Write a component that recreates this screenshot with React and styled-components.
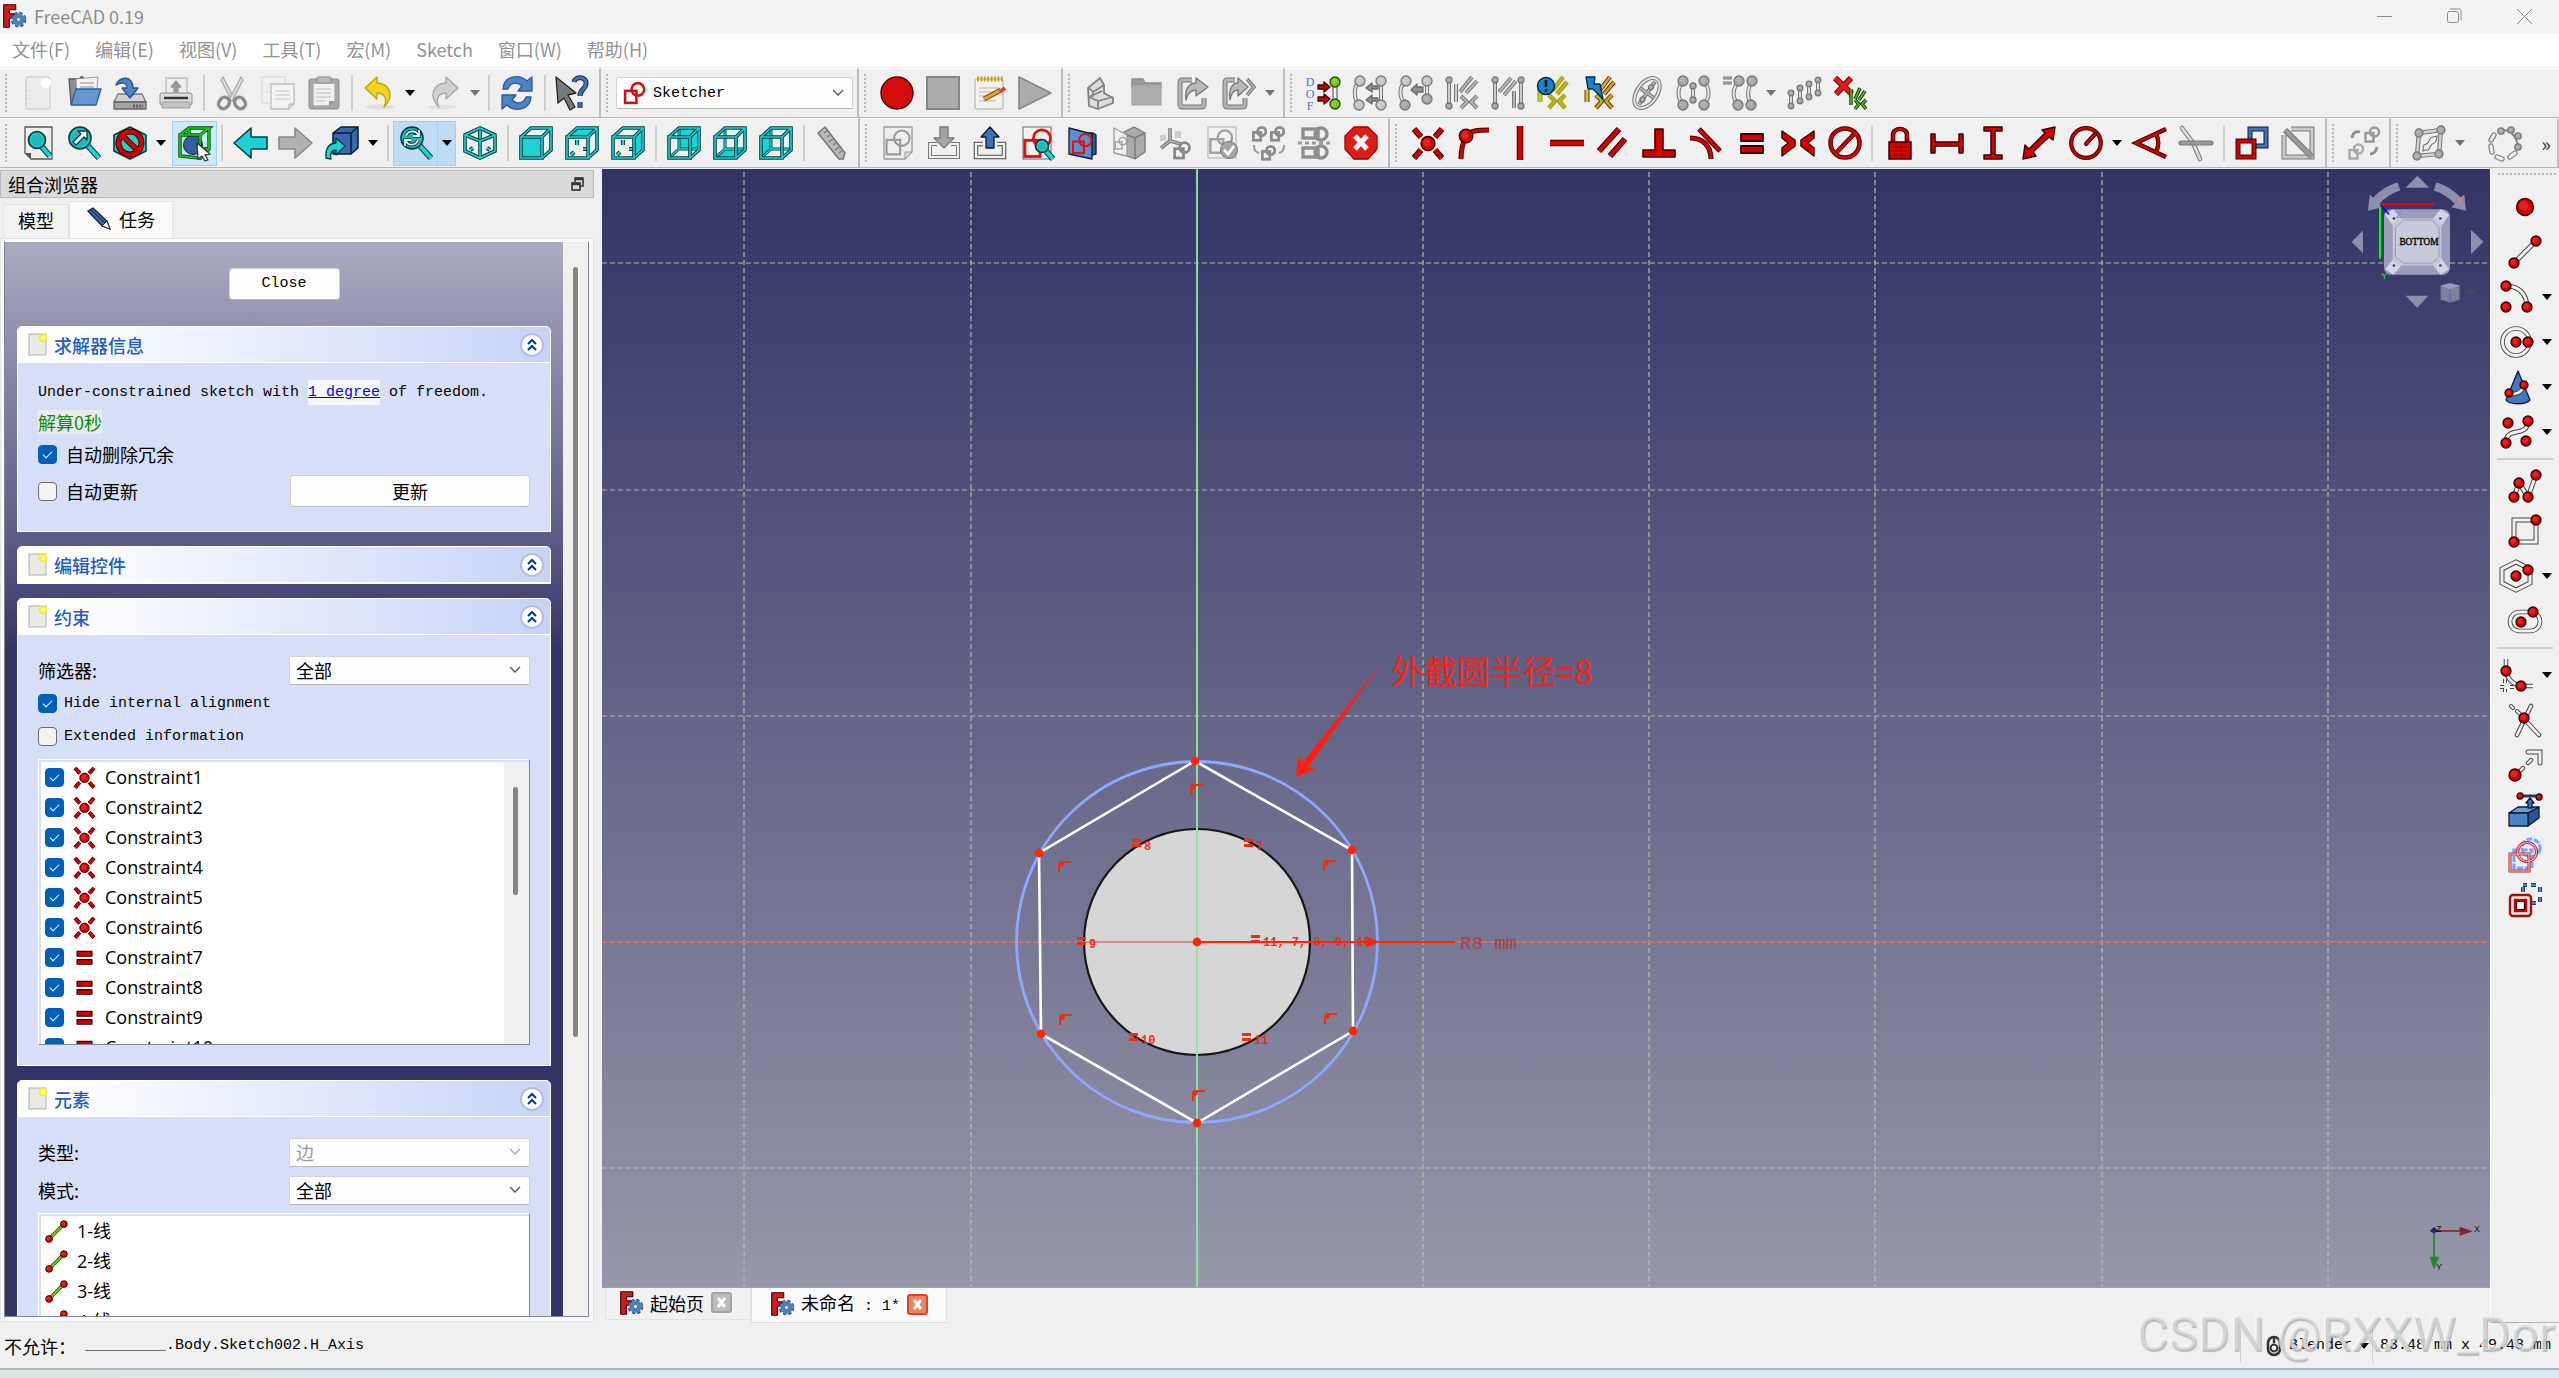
import { useState } from "react";
import styled, { createGlobalStyle, css } from "styled-components";

const SANS = `"Open Sans", "Noto Sans CJK SC", sans-serif`;
const SONG = `"Noto Sans CJK SC", sans-serif`;
const MONO = `"Liberation Mono", "Noto Sans CJK SC", monospace`;

const GlobalStyle = createGlobalStyle`
  * {
    box-sizing: border-box;
  }

  body {
    margin: 0;
    background: #f0f0f0;
    color: #000;
    font-family: ${SONG};
    font-size: 18px;
  }

  button, select, input {
    font: inherit;
    color: inherit;
    margin: 0;
  }

  svg {
    display: block;
  }
`;

// ICON PARTS =======================
const RED = "#d40000";
const RED_EDGE = "#3a0000";
const TEAL = "#1bd3d6";
const TEAL_EDGE = "#053c3e";
const GREY = "#a4a4a4";
const GREY_EDGE = "#777777";
const BLUE = "#3f72b8";
const BLUE_EDGE = "#0b1a33";

// a stroke with a darker outline
const Bar = ({ d, w = 5, c = RED, e = RED_EDGE, cap = "butt", fill = "none", inner = 2 }) => (
  <>
    <path d={d} fill={fill} stroke={e} strokeWidth={w} strokeLinecap={cap} strokeLinejoin="miter" />
    <path d={d} fill="none" stroke={c} strokeWidth={w - inner} strokeLinecap={cap} strokeLinejoin="miter" />
  </>
);

const Shape = ({ d, c = RED, e = RED_EDGE, w = 1.3 }) => (
  <path d={d} fill={c} stroke={e} strokeWidth={w} strokeLinejoin="round" />
);

const Dot = ({ x, y, r = 5, c = RED, e = RED_EDGE }) => (
  <>
    <circle cx={x} cy={y} r={r} fill={c} stroke={e} strokeWidth="1.3" />
    <circle cx={x - r * 0.15} cy={y - r * 0.15} r={r * 0.55} fill="#fff" opacity="0.15" />
  </>
);

const Grey = (props) => <Bar c="#b4b4b4" e={GREY_EDGE} w={4} {...props} />;
const GreyDot = (props) => <Dot c={GREY} e={GREY_EDGE} {...props} />;
const White = (props) => <Bar c="#f2f2ec" e="#444" w={5} {...props} />;

const CUBE_FACES = {
  front: "M2 11H23V32H2Z",
  top: "M2 11L12 2H33L23 11Z",
  right: "M23 11L33 2V24L23 32Z",
  rear: "M12 2H32V24H12Z",
  bottom: "M2 32L12 23H32L23 32Z",
  left: "M2 11L12 2V23L2 32Z",
};

const ViewCube = ({ face }) => {
  const behind = face === "rear" || face === "bottom" || face === "left";
  return (
    <>
      {behind && <path d={CUBE_FACES[face]} fill={TEAL} />}
      {behind ? (
        <Bar d="M12 2V23H32M12 23L2 32" w={3} c={TEAL} e={TEAL_EDGE} inner={1.6} />
      ) : (
        <Bar d="M12 14V19M18 23H23M9 26L6 29" w={4} c={TEAL} e={TEAL_EDGE} />
      )}
      {!behind && <path d={CUBE_FACES[face]} fill={TEAL} />}
      <Bar d="M2 11H23V32H2ZM2 11L12 2H32V24L23 32M23 11L32 2" w={3.6} c={TEAL} e={TEAL_EDGE} inner={2} />
    </>
  );
};

const Lens = ({ x = 13, y = 12, r = 11, tip = "M21 20L32 32" }) => (
  <>
    <Bar d={tip} w={6} c={TEAL} e={TEAL_EDGE} />
    <circle cx={x} cy={y} r={r} fill="#1aa9ad" stroke={TEAL_EDGE} strokeWidth="1.6" />
    <circle cx={x} cy={y} r={r - 2} fill="#21b6ba" stroke={TEAL} strokeWidth="1.2" />
  </>
);

const SketchMark = ({ c = "#cc1111", w = 3, x = 0, y = 0, s = 1 }) => (
  <g transform={`translate(${x} ${y}) scale(${s})`} fill="none" stroke={c} strokeWidth={w}>
    <rect x="3" y="14" width="16" height="17" />
    <circle cx="21" cy="12" r="9" />
  </g>
);

const Gear = ({ x, y, s = 1 }) => (
  <g transform={`translate(${x} ${y}) scale(${s})`}>
    <circle r="7.5" fill="none" stroke="#1d3558" strokeWidth="5" strokeDasharray="3.5 2.4" />
    <circle r="5.5" fill="none" stroke="#4b7fc6" strokeWidth="5" />
    <circle r="7.5" fill="none" stroke="#4b7fc6" strokeWidth="3" strokeDasharray="3.5 2.4" />
    <circle r="2.8" fill="#f3f3f3" stroke="#1d3558" />
  </g>
);

const Logo = () => (
  <svg width="24" height="24" viewBox="0 0 34 34">
    <Shape d="M1 1H18V8H9V14H16V20H9V33H1Z" c="#d8191b" e="#3b0000" w={1.6} />
    <Gear x={22} y={22} s={1.1} />
  </svg>
);

const Cross = () => <Bar d="M3 3L10 11M31 3L24 11M3 32L10 24M31 32L24 24" w={6} />;

const ICONS = {
  // file
  newDoc: (
    <>
      <rect x="5" y="1" width="24" height="32" rx="2" fill="#ececec" stroke="#c4c4c4" />
      <circle cx="25" cy="7" r="5" fill="#fff" />
      <path d="M8 14v1M8 22v1" stroke="#bbb" />
    </>
  ),
  open: (
    <>
      <Shape d="M2 3H12L14 1H16V28H4Z" c="#8e8e8e" e="#555" />
      <path d="M9 3L31 1L29 22L10 24Z" fill="#f4f4f4" stroke="#999" />
      <path d="M13 7H27M13 11H27" stroke="#aaa" strokeWidth="1.4" />
      <Shape d="M9 13H34L29 29H4Z" c="#6496d2" e="#2f5c99" />
    </>
  ),
  save: (
    <>
      <Shape d="M5 18H29L33 26H1Z" c="#d2d2d2" e="#777" />
      <Shape d="M1 26H33V33H1Z" c="#a3a3a3" e="#666" />
      <path d="M20 30H30" stroke="#666" strokeWidth="3" strokeDasharray="2 1" />
      <Shape d="M3 9C6 0 20 -1 20 12H25L17 22L9 12H14C14 6 8 6 3 9Z" c="#4d86cc" e="#24508c" />
    </>
  ),
  print: (
    <>
      <rect x="7" y="2" width="21" height="17" fill="#eee" stroke="#aaa" />
      <Shape d="M17 5L22 11H19V16H15V11H12Z" c="#999" e="#999" />
      <rect x="1" y="17" width="32" height="12" rx="2" fill="#dedede" stroke="#888" />
      <path d="M5 22H29" stroke="#333" strokeWidth="2.5" />
      <rect x="3" y="26" width="28" height="6" rx="1" fill="#c4c4c4" stroke="#999" />
    </>
  ),
  cut: (
    <>
      <Shape d="M8 1L20 24L17 25L6 4Z" c="#ddd" e="#aaa" />
      <Shape d="M26 1L14 24L17 25L28 4Z" c="#ddd" e="#aaa" />
      <ellipse cx="9" cy="27" rx="5" ry="6" fill="none" stroke="#8b8b8b" strokeWidth="3.5" transform="rotate(35 9 27)" />
      <ellipse cx="25" cy="27" rx="5" ry="6" fill="none" stroke="#8b8b8b" strokeWidth="3.5" transform="rotate(-35 25 27)" />
    </>
  ),
  copy: (
    <>
      <rect x="1" y="1" width="23" height="26" fill="#f2f2f2" stroke="#d4d4d4" />
      <path d="M5 8H18M5 12H18M5 16H12" stroke="#ddd" />
      <Shape d="M10 8H33V28L28 33H10Z" c="#f5f5f5" e="#bdbdbd" />
      <path d="M14 15H29M14 19H29M14 23H29" stroke="#d5d5d5" strokeWidth="1.6" />
      <path d="M33 28H28V33" fill="#ddd" stroke="#aaa" />
    </>
  ),
  paste: (
    <>
      <rect x="2" y="3" width="30" height="30" rx="2" fill="#a7a7a7" stroke="#8b8b8b" />
      <Shape d="M6 7H28V25L22 30H6Z" c="#f1f1f1" e="#aaa" />
      <rect x="10" y="1" width="14" height="6" rx="1" fill="#bbb" stroke="#888" />
      <path d="M9 13H24M9 17H24M9 21H24M9 25H18" stroke="#cdcdcd" strokeWidth="1.6" />
      <path d="M28 25H22V30Z" fill="#999" />
    </>
  ),
  undo: (
    <>
      <ellipse cx="18" cy="31" rx="14" ry="2.5" fill="#dedede" />
      <Shape d="M3 12L15 1V7C28 8 33 20 22 31C26 22 22 17 15 17V23Z" c="#edd421" e="#c0a000" />
    </>
  ),
  redo: (
    <>
      <ellipse cx="16" cy="31" rx="14" ry="2.5" fill="#e2e2e2" />
      <Shape d="M31 12L19 1V7C6 8 1 20 12 31C8 22 12 17 19 17V23Z" c="#cfcfcf" e="#a6a6a6" />
    </>
  ),
  refresh: (
    <>
      <Shape d="M3 13C4 -1 20 -2 27 5L32 1V15H18L22 10C16 5 10 7 8 13Z" c="#4d82c4" e="#2c5893" />
      <Shape d="M31 21C30 35 14 36 7 29L2 33V19H16L12 24C18 29 24 27 26 21Z" c="#4d82c4" e="#2c5893" />
    </>
  ),
  whats: (
    <>
      <Shape d="M1 1L21 17L13 19L20 31L15 34L9 22L3 27Z" c="#77797b" e="#222" />
      <Bar d="M19 6C20 0 32 0 31 8C31 13 25 13 25 20M25 26V32" w={5} c="#3f72b8" e="#14294a" />
    </>
  ),
  // macro
  record: <circle cx="17" cy="17" r="16" fill="#d30d0d" stroke="#4a0000" strokeWidth="1.4" />,
  stop: <rect x="1" y="1" width="32" height="32" fill="#ababab" stroke="#858585" strokeWidth="2" />,
  macros: (
    <>
      <rect x="3" y="3" width="28" height="30" rx="2" fill="#f3f3f0" stroke="#aaa" />
      <path d="M5 3H31" stroke="#c7a41c" strokeWidth="5" strokeDasharray="2 1.4" />
      <path d="M7 12H27M7 16H27M7 20H18M7 25H24" stroke="#c9c9c9" strokeWidth="1.4" />
      <Bar d="M12 23L29 14" w={5} c="#e9a032" e="#8a5200" />
      <path d="M28 16L33 12" stroke="#d44" strokeWidth="4" />
    </>
  ),
  play: <Shape d="M1 1L33 17L1 33Z" c="#ababab" e="#858585" w={1.6} />,
  // structure
  part: (
    <>
      <Shape d="M4 12L16 2L20 9V17L29 22V27L14 33L5 30Z" c="#dcdcdc" e="#808080" w={1.8} />
      <path d="M5 21L18 15M5 12L9 16V21M14 33V25L29 21M14 25L5 21M9 16L20 9" stroke="#808080" strokeWidth="1.6" fill="none" />
    </>
  ),
  group: (
    <>
      <Shape d="M2 3H13L15 7H31V12H2Z" c="#9b9b9b" e="#8c8c8c" />
      <rect x="2" y="9" width="29" height="20" fill="#adadad" stroke="#9c9c9c" />
    </>
  ),
  link: (
    <>
      <Grey d="M16 4H6C4 4 4 5 4 7V28C4 30 5 31 7 31H25C27 31 28 30 28 28V22" w={5} />
      <Shape d="M10 24C8 12 14 7 20 7V2L32 11L20 20V14C15 14 11 18 10 24Z" c="#b9b9b9" e="#777" />
    </>
  ),
  linkMore: (
    <>
      <Grey d="M13 4H5C3 4 3 5 3 7V28C3 30 4 31 6 31H20C22 31 23 30 23 28V22" w={5} />
      <Shape d="M8 24C6 12 11 7 16 7V2L26 11L16 20V14C12 14 9 18 8 24Z" c="#b9b9b9" e="#777" />
      <Grey d="M25 3L32 11L25 19" w={3.5} />
    </>
  ),
  // sketcher tools
  dof: (
    <>
      <g fontFamily="Liberation Serif" fontSize="12" fill="#4a6fd0" textAnchor="middle">
        <text x="4" y="10">D</text>
        <text x="4" y="22">O</text>
        <text x="4" y="34">F</text>
      </g>
      <White d="M29 6V28" w={5} />
      <Shape d="M12 9H18V6L24 11L18 16V13H12ZM12 21H18V18L24 23L18 28V25H12Z" />
      <Dot x={29} y={6} r={5} c="#73c41c" e="#234a00" />
      <Dot x={29} y={28} r={5} c="#73c41c" e="#234a00" />
    </>
  ),
  closeShape: (
    <>
      <Grey d="M8 5C1 10 1 24 8 29M29 5V29" c="#e5e5e5" />
      <Shape d="M26 10H20V7L14 12L20 16V13H26ZM26 22H20V19L14 24L20 28V25H26Z" c="#909090" e="#666" />
      <GreyDot x={8} y={5} c="#c4c4c4" /><GreyDot x={7} y={29} c="#c4c4c4" />
      <GreyDot x={29} y={5} c="#c4c4c4" /><GreyDot x={29} y={29} c="#c4c4c4" />
    </>
  ),
  connect: (
    <>
      <Grey d="M8 5C1 10 1 20 6 27M29 5V22" c="#e5e5e5" />
      <Shape d="M25 11H19V8L13 14L19 19V16H25Z" c="#909090" e="#666" />
      <GreyDot x={8} y={5} c="#c4c4c4" /><GreyDot x={7} y={29} />
      <GreyDot x={29} y={5} c="#c4c4c4" /><GreyDot x={29} y={23} />
    </>
  ),
  selConstr: (
    <>
      <Grey d="M4 4V30M11 8V26" c="#ccc" />
      <Grey d="M15 16L27 1M21 17L32 5M16 20L22 26L16 32M32 20L26 26L32 32" w={4} />
      <GreyDot x={4} y={4} r={3} /><GreyDot x={4} y={30} r={3} />
    </>
  ),
  selElem: (
    <>
      <Grey d="M4 4V30M30 4V30" c="#ccc" />
      <Grey d="M8 16L20 2M13 19L25 5M23 15V32" w={4} />
      <GreyDot x={4} y={4} r={3} /><GreyDot x={4} y={30} r={3} />
      <GreyDot x={30} y={4} r={3} /><GreyDot x={30} y={30} r={3} />
    </>
  ),
  redundant: (
    <>
      <Bar d="M3 14V26" c="#8ae234" e="#e07b00" />
      <Bar d="M16 14L26 1M20 18L30 6M12 19L18 25L12 32M28 19L22 25L28 32" w={4.5} c="#8ac926" e="#e07b00" />
      <circle cx="9" cy="10" r="8.5" fill="#1583cf" stroke="#0a2540" strokeWidth="1.5" />
      <path d="M9 4V11M9 13V16" stroke="#0a1420" strokeWidth="2.6" />
    </>
  ),
  conflict: (
    <>
      <Bar d="M3 14V26" c="#8ae234" e="#cc0000" />
      <Bar d="M16 14L26 1M20 18L30 6M12 19L18 25L12 32M28 19L22 25L28 32" w={4.5} c="#8ac926" e="#cc0000" />
      <Shape d="M2 1H11L10 8H16L19 23L9 13H4Z" c="#1583cf" e="#0a2540" />
    </>
  ),
  internal: (
    <g transform="rotate(35 17 17)">
      <ellipse cx="17" cy="17" rx="10" ry="17" fill="none" stroke="#7d7d7d" strokeWidth="4" />
      <ellipse cx="17" cy="17" rx="10" ry="17" fill="none" stroke="#e2e2e2" strokeWidth="2" />
      <Grey d="M17 3V31M9 17H25" />
      <GreyDot x={17} y={10} r={2.5} /><GreyDot x={17} y={25} r={2.5} />
    </g>
  ),
  symmetry: (
    <>
      <Grey d="M7 6C1 12 1 22 7 28M28 6C34 12 34 22 28 28M17 11V23" c="#e5e5e5" />
      <GreyDot x={7} y={5} /><GreyDot x={7} y={29} /><GreyDot x={28} y={5} /><GreyDot x={28} y={29} />
      <GreyDot x={17} y={10} r={3} /><GreyDot x={17} y={24} r={3} />
    </>
  ),
  clone: (
    <>
      <Grey d="M16 6C9 12 9 22 15 28M29 6C24 12 24 22 28 28" c="#e5e5e5" />
      <Grey d="M0 2H9M0 7H9" w={3} />
      <GreyDot x={16} y={5} /><GreyDot x={15} y={29} /><GreyDot x={29} y={5} /><GreyDot x={28} y={29} />
    </>
  ),
  array: (
    <>
      <Grey d="M4 17V30M13 13V26M22 8V22M31 4V17" c="#ddd" />
      {[[4, 17], [13, 12], [22, 8], [31, 4]].map(([x, y]) => (
        <g key={x}><GreyDot x={x} y={y} r={2.8} /><GreyDot x={x} y={y + 13} r={2.8} /></g>
      ))}
    </>
  ),
  deleteAll: (
    <>
      <Bar d="M2 2L19 18M18 2L3 18" w={6} c="#e01b1b" e="#7a0000" />
      <Bar d="M18 13V29M22 23L27 12M26 24L32 15M22 24L26 28L22 33M33 24L29 28L33 33" w={3.5} c="#57b81c" e="#123a00" inner={1.8} />
    </>
  ),
  // view
  fit: (
    <>
      <Shape d="M4 1H31V33H10L4 27Z" c="#eeeeea" e="#555" />
      <path d="M4 27H10V33Z" fill="#555" />
      <Lens x={16} y={14} r={8.5} tip="M21 21L29 30" />
    </>
  ),
  fitSel: (
    <>
      <Lens />
      <Shape d="M6 16L14 8L11 5H20V14L17 11L9 19Z" c="#fff" e={TEAL_EDGE} />
    </>
  ),
  drawStyle: (
    <>
      <Shape d="M17 1L33 9V25L17 33L1 25V9Z" c={TEAL} e={TEAL_EDGE} w={1.6} />
      <circle cx="17" cy="17" r="11.5" fill="none" stroke={RED_EDGE} strokeWidth="6" />
      <Bar d="M9 9L25 25" w={6} />
      <circle cx="17" cy="17" r="11.5" fill="none" stroke={RED} strokeWidth="4" />
    </>
  ),
  bbox: (
    <>
      <circle cx="16" cy="19" r="9.5" fill="#355f9f" stroke="#14264a" />
      <Bar d="M3 9H23V32L3 30ZM3 9L12 2H32L23 9M32 2V23L23 32M12 2V9M32 23H25" w={3.4} c="#18d018" e="#064a06" inner={1.8} />
      <Shape d="M20 17L33 28L28 29L31 34L28 35L25 30L21 33Z" c="#fff" e="#333" />
    </>
  ),
  back: <Shape d="M1 17L18 2V11H34V23H18V32Z" c={TEAL} e={TEAL_EDGE} w={1.6} />,
  forward: <Shape d="M33 17L16 2V11H0V23H16V32Z" c="#b0b0b0" e="#888" w={1.6} />,
  goLink: (
    <>
      <Shape d="M8 7L16 1H33V22L26 28H8Z" c="#3b68ac" e={BLUE_EDGE} w={1.5} />
      <path d="M8 7H26V28M26 7L33 1" fill="none" stroke={BLUE_EDGE} strokeWidth="1.5" />
      <Shape d="M1 32C0 20 6 17 11 17V12L20 20L11 29V24C6 24 5 28 6 33Z" c={TEAL} e={TEAL_EDGE} />
    </>
  ),
  syncView: (
    <>
      <Lens />
      <path d="M7 10C9 4 17 4 19 9M20 4V10H14M19 14C17 20 9 20 7 15M6 20V14H12" fill="none" stroke={TEAL_EDGE} strokeWidth="3.6" />
      <path d="M7 10C9 4 17 4 19 9M20 4V10H14M19 14C17 20 9 20 7 15M6 20V14H12" fill="none" stroke="#eee" strokeWidth="1.8" />
    </>
  ),
  iso: (
    <>
      <Bar d="M17 4V13M10 22L7 24M24 22L27 24" w={4} c={TEAL} e={TEAL_EDGE} />
      <Bar d="M17 2L32 9V25L17 32L2 25V9ZM2 9L17 15L32 9M17 15V32" w={3.6} c={TEAL} e={TEAL_EDGE} />
    </>
  ),
  front: <ViewCube face="front" />,
  top: <ViewCube face="top" />,
  right: <ViewCube face="right" />,
  rear: <ViewCube face="rear" />,
  bottom: <ViewCube face="bottom" />,
  left: <ViewCube face="left" />,
  measure: (
    <>
      <Shape d="M10 1L30 27L28 33H24L3 7Z" c="#b9b9b9" e="#777" w={1.6} />
      <path d="M12 5L9 7M15 9L12 11M18 13L14 16M21 17L18 19M24 21L20 24M27 25L24 27" stroke="#777" strokeWidth="1.4" />
    </>
  ),
  // sketch
  newSketch: (
    <>
      <Shape d="M3 1H31V26L24 33H3Z" c="#eeeeee" e="#999" />
      <SketchMark c="#999" w={2.5} x={3} y={2} s={0.85} />
      <path d="M31 26H24V33Z" fill="#ddd" stroke="#999" />
    </>
  ),
  importSk: (
    <>
      <Grey d="M10 18H3V31H31V18H24" c="#eee" />
      <Shape d="M13 1H21V12H27L17 22L7 12H13Z" c={GREY} e={GREY_EDGE} />
    </>
  ),
  leave: (
    <>
      <White d="M10 18H3V31H31V18H24" w={4.5} />
      <Shape d="M17 1L26 11H21V22H13V11H8Z" c={BLUE} e={BLUE_EDGE} />
    </>
  ),
  viewSketch: (
    <>
      <rect x="3" y="1" width="28" height="32" fill="#f3f3f0" stroke="#666" />
      <SketchMark c="#e01010" w={3} x={2} y={1} s={0.95} />
      <Lens x={22} y={20} r={6.5} tip="M26 25L33 33" />
    </>
  ),
  section: (
    <>
      <Shape d="M18 7H27L30 9V28L22 31Z" c="#2d5a9b" e={BLUE_EDGE} />
      <Shape d="M3 2L26 8V33L3 28Z" c="#5b8fd0" e={BLUE_EDGE} />
      <SketchMark c="#e01010" w={3} x={5} y={6} s={0.68} />
    </>
  ),
  mapSketch: (
    <>
      <Shape d="M10 7L22 1L33 7V26L23 33L10 28Z" c="#ababab" e="#777" />
      <path d="M10 7L23 12L33 7M23 12V33" fill="none" stroke="#777" strokeWidth="1.4" />
      <Shape d="M2 2L15 9V30L2 27Z" c="#f0f0f0" e="#999" />
      <SketchMark c="#999" w={3} x={2} y={10} s={0.42} />
    </>
  ),
  reorient: (
    <>
      <Grey d="M11 2V15M11 15L2 22M11 15L22 18" w={3.5} />
      <rect x="16" y="5" width="6" height="7" fill="#ccc" /><rect x="1" y="9" width="6" height="6" fill="#ccc" />
      <SketchMark c="#888" w={5} x={14} y={15} s={0.55} />
    </>
  ),
  validate: (
    <>
      <rect x="3" y="1" width="28" height="31" fill="#f2f2f2" stroke="#aaa" />
      <SketchMark c="#a0a0a0" w={3} x={3} y={2} s={0.8} />
      <circle cx="24" cy="24" r="8.5" fill="#a5a5a5" stroke="#777" />
      <path d="M19 24L23 28L29 20" fill="none" stroke="#fff" strokeWidth="2.6" />
    </>
  ),
  merge: (
    <>
      <SketchMark c="#8c8c8c" w={6} x={0} y={0} s={0.46} />
      <SketchMark c="#8c8c8c" w={6} x={18} y={0} s={0.46} />
      <SketchMark c="#8c8c8c" w={6} x={9} y={19} s={0.46} />
      <path d="M2 19C2 25 4 26 7 27M32 19C32 25 30 26 27 27" fill="none" stroke="#999" strokeWidth="2" />
    </>
  ),
  mirror: (
    <>
      <path d="M0 17H34" stroke="#999" strokeWidth="3" strokeDasharray="4 3" />
      <g fill="none" stroke="#8d8d8d" strokeWidth="3.4">
        <rect x="5" y="3" width="15" height="9" /><circle cx="23" cy="8" r="6" />
        <rect x="5" y="22" width="15" height="9" /><circle cx="23" cy="26" r="6" />
      </g>
    </>
  ),
  stopOp: (
    <>
      <ellipse cx="17" cy="32" rx="15" ry="2" fill="#ddd" />
      <Shape d="M10 1H24L33 10V23L24 33H10L1 23V10Z" c="#dd1c1c" e="#a00000" />
      <path d="M11 10L23 23M23 10L11 23" stroke="#f4f4f4" strokeWidth="5" />
    </>
  ),
  // constraints
  coincident: (<><Cross /><Dot x={17} y={17.5} r={7} /></>),
  pointOn: (
    <>
      <Bar d="M4 33C4 24 5 18 9 10C14 4 22 4 32 4" w={5} />
      <Dot x={9} y={10} r={6.8} />
    </>
  ),
  vertical: <Bar d="M17 0V34" w={6.5} />,
  horizontal: <Bar d="M0 17H34" w={6.5} />,
  parallel: <Bar d="M3 25L23 3M14 30L29 13" w={6} />,
  perpendicular: <Shape d="M13 3H21V24H33V31H1V24H13Z" w={1.6} />,
  tangent: <Bar d="M10 3L31 25M1 12C14 12 22 20 22 33" w={5} />,
  equal: <Shape d="M6 8H28V15H6ZM6 20H28V27H6Z" w={1.8} />,
  symmetric: <Shape d="M1 5L14 14V20L1 30V22L7 17L1 12ZM33 5L20 14V20L33 30V22L27 17L33 12Z" w={1.5} />,
  block: (
    <>
      <circle cx="17" cy="17" r="14.5" fill="none" stroke={RED_EDGE} strokeWidth="4.6" />
      <Bar d="M7 28L27 7" w={4.6} />
      <circle cx="17" cy="17" r="14.5" fill="none" stroke={RED} strokeWidth="2.6" />
    </>
  ),
  lock: (
    <>
      <Bar d="M10 16V9C10 1 24 1 24 9V16" w={4.6} />
      <rect x="6" y="16" width="22" height="17" fill={RED} stroke={RED_EDGE} strokeWidth="1.5" />
      <path d="M8 21H26M8 25H26M8 29H26" stroke="#8d0000" />
    </>
  ),
  distX: <Shape d="M1 8H5V16H29V8H33V27H29V20H5V27H1Z" w={1.5} />,
  distY: <Shape d="M8 1H26V5H19V29H26V33H8V29H15V5H8Z" w={1.5} />,
  distance: <Shape d="M33 1L31 14L27 11L11 26L14 30L1 33L3 19L7 23L23 7L20 4Z" w={1.5} />,
  radius: (
    <>
      <circle cx="17" cy="17" r="14.8" fill="none" stroke={RED_EDGE} strokeWidth="4.2" />
      <circle cx="17" cy="17" r="14.8" fill="none" stroke={RED} strokeWidth="2.2" />
      <Bar d="M17 18L26 8" w={4.2} cap="round" />
    </>
  ),
  angle: <Bar d="M33 3L3 17L33 31M23 8C26 13 26 21 23 26" w={4.4} />,
  snell: (
    <>
      <Grey d="M3 2L14 17L21 33" c="#ddd" w={4.6} cap="round" />
      <Grey d="M2 17H32" c="#999" w={5} cap="round" />
    </>
  ),
  driving: (
    <>
      <Bar d="M15 3H31V20H15Z" w={5} c={BLUE} e={BLUE_EDGE} />
      <Bar d="M3 15H19V31H3Z" w={5} fill="#f0f0f0" />
    </>
  ),
  activate: (
    <>
      <Grey d="M10 3H31V31H3V9" c="#c9c9c9" w={5} />
      <Grey d="M4 4L31 31" c="#999" w={6} />
    </>
  ),
  swap: (
    <>
      <SketchMark c="#999" w={5} x={16} y={0} s={0.5} />
      <SketchMark c="#aaa" w={5} x={0} y={17} s={0.5} />
      <path d="M4 12C5 6 8 5 12 6M22 28C26 28 28 26 29 21" fill="none" stroke="#8d8d8d" strokeWidth="2.8" />
    </>
  ),
  bspline: (
    <>
      <Grey d="M7 7L29 4L27 28L5 30Z" c="#d2d2d2" w={4.5} />
      <path d="M11 25C11 14 14 22 17 15C19 9 21 12 25 10C24 21 21 14 18 21C16 27 14 22 11 25Z" fill="#eee" stroke="#777" strokeWidth="1.2" />
      <GreyDot x={7} y={7} r={4} /><GreyDot x={29} y={4} r={4} /><GreyDot x={27} y={28} r={4} /><GreyDot x={5} y={30} r={4} />
    </>
  ),
  comb: (
    <>
      <path d="M14 5C22 2 30 10 31 21" fill="none" stroke="#888" strokeWidth="2" />
      <path d="M7 9L4 14M4 20L5 26M10 31L15 33M23 31L28 27" stroke="#808080" strokeWidth="5.4" strokeLinecap="round" />
      <path d="M7 9L4 14M4 20L5 26M10 31L15 33M23 31L28 27" stroke="#efefef" strokeWidth="3" strokeLinecap="round" />
      <GreyDot x={14} y={5} r={3.2} /><GreyDot x={24} y={4} r={3.2} /><GreyDot x={31} y={10} r={3.2} /><GreyDot x={31} y={21} r={3.2} />
    </>
  ),
  // geometry
  point: <Dot x={17} y={17} r={8.5} />,
  line: (<><White d="M6 28L28 6" /><Dot x={6} y={28} r={5} /><Dot x={28} y={6} r={5} /></>),
  arc: (<><White d="M7 6C20 6 28 14 28 28" /><Dot x={7} y={6} r={5} /><Dot x={7} y={27} r={5} /><Dot x={28} y={27} r={5} /></>),
  circle: (
    <>
      <circle cx="17" cy="17" r="13.5" fill="none" stroke="#444" strokeWidth="4.6" />
      <circle cx="17" cy="17" r="13.5" fill="none" stroke="#f2f2ec" strokeWidth="2.8" />
      <Dot x={17} y={17} r={5} /><Dot x={29} y={17} r={5} />
    </>
  ),
  conic: (
    <>
      <Shape d="M19 1L31 30C27 35 10 35 7 30Z" c="#3f78bf" e={BLUE_EDGE} />
      <White d="M10 24C17 25 23 22 25 16" w={4.6} />
      <Dot x={10} y={23} r={4} /><Dot x={25} y={15} r={4} />
    </>
  ),
  spline: (
    <>
      <White d="M7 28C7 10 28 24 29 6" />
      <Dot x={9} y={8} r={5} /><Dot x={29} y={6} r={5} /><Dot x={7} y={28} r={5} /><Dot x={27} y={26} r={5} />
    </>
  ),
  polyline: (
    <>
      <White d="M6 28L11 14L20 28L28 6" />
      <Dot x={6} y={28} r={5} /><Dot x={11} y={14} r={5} /><Dot x={20} y={28} r={5} /><Dot x={28} y={6} r={5} />
    </>
  ),
  rectangle: (<><White d="M6 6H28V28H6Z" /><Dot x={28} y={6} r={5} /><Dot x={6} y={28} r={5} /></>),
  polygon: (
    <>
      <White d="M17 3L31 10V24L17 31L3 24V10Z" />
      <Dot x={17} y={17} r={5} /><Dot x={29} y={11} r={5} />
    </>
  ),
  slot: (
    <>
      <rect x="2" y="8" width="30" height="19" rx="9.5" fill="none" stroke="#444" strokeWidth="4.6" />
      <rect x="2" y="8" width="30" height="19" rx="9.5" fill="none" stroke="#f2f2ec" strokeWidth="2.8" />
      <Dot x={13} y={18} r={5} /><Dot x={25} y={8} r={5} />
    </>
  ),
  fillet: (
    <>
      <White d="M7 1V12C8 22 14 26 22 28H34" w={4.6} />
      <White d="M6 21V25M6 31V34M1 29H5M11 29H15" w={4} />
      <Dot x={7} y={13} r={5} /><Dot x={22} y={28} r={5} />
    </>
  ),
  trim: (
    <>
      <White d="M23 3L9 32M16 16L31 32" cap="round" w={4.6} />
      <White d="M3 3L5 5M9 8L12 11" cap="round" w={4} />
      <Dot x={16} y={15} r={5} />
    </>
  ),
  extend: (
    <>
      <White d="M20 4H32V15" w={5} cap="round" />
      <White d="M12 23L15 20M20 15L23 12" w={4.4} cap="round" />
      <Dot x={7} y={27} r={6} />
    </>
  ),
  external: (
    <>
      <Shape d="M1 20L10 14H31L20 20Z" c="#6b9cd6" e={BLUE_EDGE} />
      <Shape d="M20 20L31 14V25L20 33Z" c="#2c5593" e={BLUE_EDGE} />
      <Shape d="M1 20H20V33H1Z" c="#4a80c4" e={BLUE_EDGE} />
      <path d="M12 3H31" stroke="#223a5e" strokeWidth="3" />
      <Shape d="M22 5L26 10H24V15H20V10H18Z" c={BLUE} e={BLUE_EDGE} />
      <Dot x={12} y={3} r={3} /><Dot x={31} y={4} r={3} />
    </>
  ),
  carbon: (
    <>
      <g fill="none" stroke="#7aa2ff" strokeWidth="3.2" strokeDasharray="6 1.5">
        <rect x="6" y="12" width="18" height="18" /><circle cx="23" cy="10" r="9" />
      </g>
      <g fill="none" stroke="#b8232a" strokeWidth="3">
        <rect x="2" y="16" width="19" height="17" /><circle cx="19" cy="14" r="9.5" />
      </g>
      <g fill="none" stroke="#f4b9bb" strokeWidth="1.2">
        <rect x="2" y="16" width="19" height="17" /><circle cx="19" cy="14" r="9.5" />
      </g>
    </>
  ),
  construction: (
    <>
      <Bar d="M15 9V4M15 2H19M23 2H28M32 4V9M32 14V19M24 20H28" w={4} c="#4a80c4" e="#1d3c6b" />
      <rect x="2" y="12" width="21" height="21" rx="3" fill="#f2e6e0" stroke="#a30d0d" strokeWidth="2.4" />
      <rect x="7" y="17" width="11" height="11" fill="#fff" stroke="#c00" strokeWidth="2.4" />
      <rect x="8.5" y="18.5" width="8" height="8" fill="#fff" stroke="#200" strokeWidth="1.2" />
    </>
  ),
};

const Icon = ({ name, size = 34 }) => (
  <svg width={size} height={size} viewBox="0 0 34 34" overflow="visible" aria-hidden="true">
    {ICONS[name]}
  </svg>
);

const Chevron = ({ muted }) => (
  <svg width="12" height="8" viewBox="0 0 12 8" aria-hidden="true">
    <path d="M1 1L6 6L11 1" fill="none" stroke={muted ? "#a5a5a5" : "#555"} strokeWidth="1.3" />
  </svg>
);

// LAYOUT =======================
const Page = styled.div`
  position: relative;
  display: flex;
  flex-direction: column;
  height: 100vh;
  min-height: 700px;
  overflow: hidden;
`;

const TitleBar = styled.header`
  display: flex;
  align-items: center;
  gap: 7px;
  height: 34px;
  padding: 0 0 2px 3px;
  background: #f3f3f3;
  color: #8c8c8c;
  font-size: 18px;
  line-height: 24px;
`;

const WindowButtons = styled.div`
  display: flex;
  margin-left: auto;
`;

const WindowButton = styled.button`
  display: grid;
  place-items: center;
  width: 70px;
  height: 32px;
  border: 0;
  background: none;
`;

const MenuBar = styled.nav`
  display: flex;
  align-items: center;
  height: 34px;
  padding-bottom: 4px;
  background: #fff;
  border-bottom: 1px solid #ececec;
`;

const MenuItem = styled.button`
  border: 0;
  padding: 0 13px 0 12px;
  background: none;
  color: #929292;
  font-size: 18px;
  line-height: 28px;
`;

const ToolbarRow = styled.div`
  display: grid;
  grid-template-columns: ${(p) => p.$columns};
  height: 50px;
  background: #f0f0f0;
`;

const Toolbar = styled.div`
  min-width: 0;
  display: flex;
  align-items: center;
  gap: 8px;
  padding: 0 4px 0 5px;
  border-top: 1px solid #fff;
  border-bottom: 1px solid #b5b5b5;
  border-right: ${(p) => (p.$open ? "0" : "2px solid #bcbcbc")};
`;

const ToolbarItems = styled.div`
  flex: 1;
  min-width: 0;
  display: flex;
  align-items: center;
  justify-content: space-between;
`;

const Handle = styled.div`
  flex: none;
  width: 2px;
  height: 38px;
  background: repeating-linear-gradient(#b9b9b9 0 2px, transparent 2px 4px);
`;

const SideHandle = styled.div`
  width: 60px;
  height: 2px;
  margin: 4px 0 9px 5px;
  background: repeating-linear-gradient(90deg, #b9b9b9 0 2px, transparent 2px 4px);
`;

const Separator = styled.div`
  flex: none;
  width: 8px;
  height: 36px;
  background: linear-gradient(#cfcfcf, #cfcfcf) center / 2px 100% no-repeat;
`;

const SideSeparator = styled.div`
  width: 56px;
  height: 9px;
  background: linear-gradient(#cfcfcf, #cfcfcf) center / 100% 2px no-repeat;
`;

const ButtonGroup = styled.div`
  flex: none;
  display: flex;
  align-items: center;
`;

const ToolButton = styled.button`
  display: grid;
  place-items: center;
  width: 45px;
  height: 45px;
  padding: 0;
  border: 1px solid transparent;
  background: none;
  ${(p) =>
    p.$active &&
    css`
      background: ${p.$menu ? "#bedcf3" : "#cce8ff"};
      border-color: #99d1ff;
    `}
`;

const MenuButton = styled.button`
  display: grid;
  place-items: center;
  width: 18px;
  height: 45px;
  padding: 0;
  border: 1px solid ${(p) => (p.$active ? "#99d1ff" : "transparent")};
  border-left: 0;
  background: ${(p) => (p.$active ? "#bedcf3" : "none")};

  &::after {
    content: "";
    border: 5px solid transparent;
    border-top: 6px solid ${(p) => (p.$muted ? "#737373" : "#000")};
    border-bottom: 0;
  }
`;

const More = styled.span`
  width: 14px;
  text-align: center;
  color: #333;
  font-size: 20px;
`;

const Main = styled.main`
  flex: 1;
  min-height: 0;
  display: grid;
  grid-template-columns: minmax(400px, 602fr) 1888fr 69px;
  padding-top: 1px;
`;

const Dock = styled.aside`
  min-width: 0;
  min-height: 0;
  display: flex;
  flex-direction: column;
  padding: 1px 8px 1px 0;
`;

const DockTitle = styled.div`
  flex: none;
  display: flex;
  align-items: center;
  justify-content: space-between;
  height: 28px;
  padding: 0 9px 0 7px;
  border: 1px solid #b8b8b8;
  background: #dadada;
`;

const FloatButton = styled.button`
  padding: 0;
  border: 0;
  background: none;
`;

const DockTabs = styled.div`
  flex: none;
  display: flex;
  align-items: flex-end;
  height: 40px;
  padding-left: 3px;
`;

const DockTab = styled.button`
  display: flex;
  align-items: center;
  justify-content: center;
  gap: 8px;
  height: ${(p) => (p.$active ? "37px" : "34px")};
  padding: 0 ${(p) => (p.$active ? "17px" : "14px")} 3px;
  border: 1px solid #e4e4e4;
  border-bottom: 0;
  background: ${(p) => (p.$active ? "#fafafa" : "#f3f3f3")};
  line-height: 24px;
`;

const DockPane = styled.div`
  flex: 1;
  min-height: 0;
  display: flex;
  padding: 2px 4px 4px 3px;
  border: 1px solid #e2e2e2;
  background: #fafafa;
`;

const TaskFrame = styled.div`
  flex: 1;
  min-width: 0;
  display: flex;
  border: 1px solid #7f8794;
  border-top: 1px solid #fff;
  background: #f0f0f0;
`;

const TaskPanel = styled.div`
  flex: 1;
  min-width: 0;
  display: flex;
  flex-direction: column;
  gap: 14px;
  padding: 26px 12px 0;
  overflow: hidden;
  background: linear-gradient(#ababbf 0, #9292b0 86px, #5b5a85 300px, #333366 410px);

  > * {
    flex: none;
  }
`;

const ScrollTrack = styled.div`
  flex: none;
  width: 25px;
  padding: ${(p) => (p.$list ? "25px 9px" : "25px 10px")};
  background: #f0f0f0;
`;

const ScrollThumb = styled.div`
  width: 5px;
  height: ${(p) => p.$size};
  border-radius: 3px;
  background: #858585;
`;

const PushButton = styled.button`
  width: ${(p) => (p.$wide ? "240px" : "111px")};
  height: 32px;
  padding: 0;
  border: 1px solid #d0d0d0;
  border-bottom-color: #b9b9b9;
  border-radius: 4px;
  background: #fdfdfd;
  font-family: ${(p) => (p.$wide ? SONG : MONO)};
  font-size: ${(p) => (p.$wide ? "18px" : "15px")};
  line-height: 26px;
`;

const CloseRow = styled.div`
  display: flex;
  justify-content: center;
  margin-bottom: 12px;
`;

const Group = styled.section`
  border: 1px solid #fff;
  border-radius: 5px 5px 0 0;
  background: #d6dff7;
`;

const GroupHeader = styled.h2`
  display: flex;
  align-items: center;
  gap: 6px;
  height: 36px;
  margin: 0;
  padding: 0 6px 0 10px;
  border-bottom: 1px solid #fff;
  border-radius: 5px 5px 0 0;
  background: linear-gradient(90deg, #fff 8%, #c6d3f7);
  color: #215dc6;
  font-size: 18px;
  font-weight: 500;
  line-height: 24px;

  span {
    flex: 1;
  }
`;

const FoldButton = styled.button`
  display: grid;
  place-items: center;
  width: 24px;
  height: 24px;
  padding: 0;
  border: 2px solid #b4bdda;
  border-radius: 50%;
  background: #fff;
`;

const GroupBody = styled.div`
  padding: ${(p) => p.$pad || "16px"} 20px 20px 20px;
`;

const Line = styled.p`
  display: flex;
  align-items: center;
  height: 30px;
  margin: 0;
  font-family: ${MONO};
  font-size: 15px;
  white-space: pre;

  a {
    background: #f7f7fd;
    color: #0000ff;
    line-height: 25px;
  }
`;

const Solved = styled.span`
  background: #ebebeb;
  color: #0a8a0a;
  font-family: ${SONG};
  font-size: 18px;
  line-height: 24px;
`;

const Row = styled.div`
  display: flex;
  align-items: center;
  justify-content: space-between;
  height: ${(p) => p.$h};
  line-height: 24px;
`;

const Check = styled.label`
  display: flex;
  align-items: center;
  gap: ${(p) => (p.$mono ? "7px" : "9px")};
  font-family: ${(p) => (p.$mono ? MONO : SONG)};
  font-size: ${(p) => (p.$mono ? "15px" : "18px")};
`;

const Tick = styled.input.attrs({ type: "checkbox" })`
  appearance: none;
  flex: none;
  display: grid;
  place-items: center;
  width: 19px;
  height: 19px;
  border: 1px solid #6b6b6b;
  border-radius: 4px;
  background: #f3f3f3;

  &:checked {
    border-color: #005fb8;
    background: #005fb8;
  }

  &:checked::after {
    content: "";
    width: 8px;
    height: 4px;
    margin-bottom: 2px;
    border-left: 1px solid #fff;
    border-bottom: 1px solid #fff;
    transform: rotate(-45deg);
  }
`;

const SelectBox = styled.div`
  display: flex;
  align-items: center;
  width: 241px;
  height: ${(p) => (p.$tall ? "32px" : "29px")};
  padding: 0 8px 0 6px;
  border: 1px solid #d2d2d2;
  border-bottom-color: #b5b5b5;
  border-radius: 2px;
  background: #fdfdfd;
  color: ${(p) => (p.$muted ? "#9a9a9a" : "#000")};

  select {
    appearance: none;
    flex: 1;
    min-width: 0;
    border: 0;
    padding: 0;
    background: none;
    opacity: 1;
    font-family: ${(p) => (p.$tall ? MONO : SONG)};
    font-size: ${(p) => (p.$tall ? "15px" : "18px")};
  }
`;

const WorkbenchBox = styled(SelectBox)`
  flex: 1;
  width: auto;
  gap: 6px;
`;

const ListFrame = styled.div`
  display: flex;
  height: 286px;
  margin-top: ${(p) => p.$top};
  padding: 2px 0 0 2px;
  border: 1px solid #fff;
  border-right-color: #7f8794;
  border-bottom-color: #7f8794;
`;

const List = styled.ul`
  flex: 1;
  min-width: 0;
  margin: 0;
  padding: 0 0 0 4px;
  overflow: hidden;
  background: #fff;
  list-style: none;
  font-family: ${SANS};
  font-size: 18px;
  line-height: 26px;
`;

const ListItem = styled.li`
  display: flex;
  align-items: center;
  gap: 9px;
  height: 30px;

  label {
    display: flex;
    align-items: center;
    gap: 9px;
  }
`;

const Work = styled.section`
  min-width: 0;
  min-height: 0;
  display: flex;
  flex-direction: column;
`;

const Viewport = styled.div`
  position: relative;
  flex: 1;
  min-height: 0;
  overflow: hidden;
  border-bottom: 1px solid #a0a0a0;
  background: linear-gradient(#333366, #9797aa);
`;

const Canvas = styled.svg`
  width: 100%;
  height: 100%;
`;

const NavCube = styled.svg`
  position: absolute;
  top: 4px;
  right: 5px;
`;

const AxisCross = styled.svg`
  position: absolute;
  right: 8px;
  bottom: 15px;
`;

const DocTabs = styled.div`
  flex: none;
  display: flex;
  align-items: flex-start;
  height: 35px;
  padding-left: 3px;
`;

const DocTab = styled.div`
  display: flex;
  align-items: center;
  gap: 7px;
  height: ${(p) => (p.$active ? "35px" : "32px")};
  padding: 0 18px 2px ${(p) => (p.$active ? "19px" : "14px")};
  border: 1px solid #e2e2e2;
  border-top: 0;
  background: ${(p) => (p.$active ? "#fafafa" : "#f1f1f1")};
  line-height: 24px;
`;

const DocName = styled.button`
  display: flex;
  align-items: center;
  gap: 6px;
  padding: 0;
  border: 0;
  background: none;
`;

const Mono = styled.span`
  font-family: ${MONO};
  font-size: 15px;
  white-space: pre;
`;

const CloseTab = styled.button`
  display: grid;
  place-items: center;
  width: 21px;
  height: 21px;
  padding: 0;
  border: 2px solid ${(p) => (p.$active ? "#d8442c" : "#a3a3a3")};
  border-radius: 3px;
  background: ${(p) => (p.$active ? "#e88660" : "#bdbdbd")};
`;

const SideTools = styled.aside`
  display: flex;
  flex-direction: column;
  align-items: center;
  border-left: 1px solid #fff;
  border-bottom: 1px solid #b5b5b5;
`;

const StatusBar = styled.footer`
  display: flex;
  align-items: center;
  height: 45px;
  padding: 0 8px 0 4px;
  line-height: 24px;
`;

const Message = styled.div`
  flex: 1;
  display: flex;
  align-items: center;
  gap: 9px;
`;

const StatusItem = styled.div`
  display: flex;
  align-items: center;
  height: 34px;
  padding-left: ${(p) => p.$pad};
  border-left: 1px solid #d0d0d0;
`;

const NavStyle = styled.button`
  display: flex;
  align-items: center;
  gap: 7px;
  width: 106px;
  padding: 0;
  border: 0;
  background: none;
  font-family: ${MONO};
  font-size: 15px;

  &::after {
    content: "";
    border: 5px solid transparent;
    border-top: 6px solid #000;
    border-bottom: 0;
  }
`;

const Desktop = styled.div`
  height: 10px;
  border-top: 2px solid #acb5b8;
  background: linear-gradient(90deg, #dbe6e3, #d5eaf3 30%, #d8eaf4);
`;

const Watermark = styled.div`
  position: absolute;
  right: 4px;
  bottom: 14px;
  color: rgba(226, 226, 226, 0.55);
  font-family: Roboto, sans-serif;
  font-size: 49px;
  line-height: 60px;
  text-shadow: 1px 2px 1px rgba(120, 120, 120, 0.45), -1px -1px 0 rgba(255, 255, 255, 0.6);
  pointer-events: none;
`;

// TOOLBAR DATA =======================
const FILE_TOOLS = ["newDoc", "open", "save", "print", "|", "cut", "copy", "paste", "|", "undo+", "redo~", "|", "refresh", "|", "whats"];
const MACRO_TOOLS = ["record", "stop", "macros", "play"];
const STRUCTURE_TOOLS = ["part", "group", "link", "linkMore~"];
const SKETCHER_TOOLS = ["dof", "closeShape", "connect", "selConstr", "selElem", "redundant", "conflict", "internal", "symmetry", "clone~", "array", "deleteAll"];
const VIEW_TOOLS = ["fit", "fitSel", "drawStyle+", "bbox*", "|", "back", "forward", "goLink+", "|", "syncView+*", "iso", "|", "front", "top", "right", "|", "rear", "bottom", "left", "|", "measure"];
const SKETCH_TOOLS = ["newSketch", "importSk", "leave", "viewSketch", "section", "mapSketch", "reorient", "validate", "merge", "mirror", "stopOp"];
const CONSTRAINT_TOOLS = ["coincident", "pointOn", "vertical", "horizontal", "parallel", "perpendicular", "tangent", "equal", "symmetric", "block", "|", "lock", "distX", "distY", "distance", "radius+", "angle", "snell", "|", "driving", "activate"];
const GEOMETRY_TOOLS = ["point", "line", "arc+", "circle+", "conic+", "spline+", "|", "polyline", "rectangle", "polygon+", "slot", "|", "fillet+", "trim", "extend", "external", "carbon", "construction"];

// "+" has a menu, "~" has a greyed menu, "*" is switched on
const Tools = ({ items, side }) =>
  items.map((item, i) => {
    if (item === "|") return side ? <SideSeparator key={i} /> : <Separator key={i} />;
    const name = item.replace(/[+~*]/g, "");
    const menu = /[+~]/.test(item);
    const active = item.includes("*");
    return (
      <ButtonGroup key={i}>
        <ToolButton aria-label={name} $active={active} $menu={menu}>
          <Icon name={name} />
        </ToolButton>
        {menu && <MenuButton aria-label={`${name} menu`} $active={active} $muted={item.includes("~")} />}
      </ButtonGroup>
    );
  });

const Strip = ({ items, open, children }) => (
  <Toolbar $open={open}>
    <Handle />
    {children || <ToolbarItems><Tools items={items} /></ToolbarItems>}
  </Toolbar>
);

const TaskGroup = ({ title, children, pad }) => (
  <Group>
    <GroupHeader>
      <svg width="20" height="23" viewBox="0 0 20 23">
        <rect x="1" y="1" width="17" height="21" fill="#e9e9e6" stroke="#b0b0a8" />
        <circle cx="15" cy="5" r="4.5" fill="#f5ee3a" />
        <circle cx="15" cy="5" r="2" fill="#fdfbb0" />
      </svg>
      <span>{title}</span>
      <FoldButton aria-label={title}>
        <svg width="12" height="14" viewBox="0 0 12 14">
          <path d="M2 6L6 2L10 6M2 12L6 8L10 12" fill="none" stroke="#0033a0" strokeWidth="2" />
        </svg>
      </FoldButton>
    </GroupHeader>
    {children && <GroupBody $pad={pad}>{children}</GroupBody>}
  </Group>
);

const Choice = ({ id, label, value, muted }) => (
  <>
    <label htmlFor={id}>{label}</label>
    <SelectBox $muted={muted}>
      <select id={id} disabled={muted} defaultValue={value}>
        <option value={value}>{value}</option>
      </select>
      <Chevron muted={muted} />
    </SelectBox>
  </>
);

// SKETCH =======================
const HEX = [[593, 592], [750, 681], [751, 862], [595, 954], [439, 865], [437, 684]];
const CORNERS = [[587, 615], [455, 692], [720, 691], [456, 845], [721, 844], [589, 921]];
const EQUALS = [[534, 674, "8"], [646, 674, "7"], [479, 772, "9"], [531, 868, "10"], [644, 868, "11"], [653, 770, "11, 7, 8, 9, 10"]];
const GRID_X = [142, 369, 595, 821, 1047, 1273, 1500, 1726];
const GRID_Y = [94, 321, 547, 773, 999];

const Sketch = () => (
  <Canvas>
    <circle cx="595" cy="773" r="113" fill="#d6d6d6" stroke="#161616" strokeWidth="2.2" />
    <g stroke="#b9b9b4" strokeWidth="1.2" strokeDasharray="5 3">
      {GRID_X.map((x) => <line key={x} x1={x} x2={x} y1="3" y2="100%" />)}
      {GRID_Y.map((y) => <line key={y} x1="0" x2="100%" y1={y} y2={y} />)}
    </g>
    <line x1="0" x2="100%" y1="773" y2="773" stroke="#e0605f" strokeWidth="1.6" opacity="0.8" />
    <line x1="595" x2="595" y1="0" y2="100%" stroke="#86ec96" strokeWidth="1.8" />
    <circle cx="595" cy="773" r="180.5" fill="none" stroke="#8fa8ff" strokeWidth="2.8" />
    <path d={`M${HEX.map((p) => p.join(" ")).join("L")}Z`} fill="none" stroke="#fff" strokeWidth="2.6" />
    <path d="M595 773H853" stroke="#ff2600" strokeWidth="2" />
    <path d="M776 773L765 768V778Z" fill="#ff2600" stroke="#ff2600" />
    {HEX.map(([x, y]) => <circle key={`${x}-${y}`} cx={x} cy={y} r="4.4" fill="#ff2600" />)}
    <circle cx="595" cy="773" r="4.4" fill="#ff2600" />
    <g fill="#f02c0c" stroke="#f02c0c">
      {CORNERS.map(([x, y]) => (
        <g key={`${x}-${y}`}>
          <path d={`M${x + 2} ${y + 11}V${y + 5}L${x + 6} ${y + 1}H${x + 14}`} fill="none" strokeWidth="2" />
          <circle cx={x + 4} cy={y + 3} r="2.4" />
        </g>
      ))}
    </g>
    <g fill="#f02c0c" fontFamily="Liberation Mono" fontSize="12" fontWeight="bold">
      {EQUALS.map(([x, y, label]) => (
        <g key={label}>
          <rect x={x - 4} y={y - 4} width="9" height="3" />
          <rect x={x - 4} y={y + 1} width="9" height="3" />
          <text x={x + 8} y={y + 7}>{label}</text>
        </g>
      ))}
    </g>
    <text x="858" y="780" fill="#a5424a" fontFamily="Liberation Mono" fontSize="19">R8 mm</text>
    <path d="M780 493L707 597L713 600L694 608L696 588L701 593Z" fill="#ff1f10" />
    <text x="789" y="515" fill="#ff1f10" fontFamily="Noto Sans CJK SC" fontSize="33">外截圆半径=8</text>
  </Canvas>
);

const Cube = () => (
  <NavCube width="135" height="137" viewBox="30 40 405 410">
    <g fill="#8d8fae">
      <path d="M197 84L232 48L268 84ZM197 408L232 444L265 408ZM69 212V280L35 246ZM393 210V283L430 246Z" />
      <path d="M173 68L181 92C155 100 134 114 118 132L128 142L84 153L89 104L100 113C120 92 144 76 173 68Z" />
      <path d="M289 68L281 92C307 100 328 114 344 132L334 142L378 153L373 104L362 113C342 92 318 76 289 68Z" />
    </g>
    <rect x="132" y="148" width="198" height="197" rx="22" fill="#9a9cbb" />
    <g fill="#d4d6e4">
      <path d="M135 165L160 148L186 180L168 210ZM327 165L302 148L276 180L300 205ZM135 328L160 345L188 312L166 290ZM327 328L302 345L276 312L300 290Z" />
    </g>
    <g fill="#333366">
      <circle cx="162" cy="176" r="4" /><circle cx="301" cy="176" r="4" />
      <circle cx="162" cy="317" r="4" /><circle cx="301" cy="317" r="4" />
    </g>
    <path d="M158 192V302L174 317H290L304 302V192L290 176H174Z" fill="#c5c7d8" />
    <path d="M166 204V290L190 310H276L297 290V204L276 181H190Z" fill="#c8cad9" stroke="#9698b4" strokeWidth="3" />
    <path d="M120 134H282" stroke="#f00" strokeWidth="6" />
    <path d="M120 134V297" stroke="#0f0" strokeWidth="6" />
    <path d="M121 136L148 164" stroke="#00f" strokeWidth="4" />
    <g fontFamily="Liberation Sans" fontSize="28">
      <text x="349" y="134" fill="#ff6a6a">X</text>
      <text x="167" y="176" fill="#7878ff">Z</text>
      <text x="124" y="358" fill="#0f0">Y</text>
    </g>
    <text x="237" y="256" textAnchor="middle" fontFamily="Liberation Serif" fontSize="28" fill="#000" stroke="#000">BOTTOM</text>
    <path d="M302 378L330 370L359 378V420L330 428L302 420Z" fill="#7f819f" stroke="#5d5f85" strokeWidth="2" />
    <path d="M302 378L330 388L359 378L330 370Z" fill="#9a9cb6" />
    <path d="M330 388V428" stroke="#5d5f85" strokeWidth="2" />
    <path d="M372 391H408L390 409Z" fill="#47475f" />
  </NavCube>
);

const Axes = () => (
  <AxisCross width="54" height="50" viewBox="985 70 162 150">
    <path d="M1003 97H1082" stroke="#85232a" strokeWidth="5" />
    <path d="M1080 84L1120 98L1080 111Z" fill="#85232a" />
    <path d="M1003 97V176" stroke="#1f8a28" strokeWidth="5" />
    <path d="M989 174H1018L1003 213Z" fill="#1f8a28" />
    <path d="M990 97L1003 85L1016 97L1003 104Z" fill="#23237f" />
    <g fontFamily="Liberation Sans" fontSize="27" fill="#111">
      <text x="1009" y="99">Z</text>
      <text x="1123" y="99">X</text>
      <text x="1009" y="213">Y</text>
    </g>
  </AxisCross>
);

const CloseMark = () => (
  <svg width="11" height="11" viewBox="0 0 11 11">
    <path d="M2 1L9 10M9 1L2 10" stroke="#fff" strokeWidth="3" />
  </svg>
);

const MENUS = ["文件(F)", "编辑(E)", "视图(V)", "工具(T)", "宏(M)", "Sketch", "窗口(W)", "帮助(H)"];

const App = () => {
  const [options, setOptions] = useState({ redundant: true, update: false, hide: true, extended: false });
  const [constraints, setConstraints] = useState(Array(10).fill(true));

  function toggle(key) {
    setOptions({ ...options, [key]: !options[key] });
  }

  function toggleConstraint(index) {
    setConstraints(constraints.map((on, i) => (i === index ? !on : on)));
  }

  return (
    <>
      <GlobalStyle />
      <Page>
        <TitleBar>
          <Logo />
          <span>FreeCAD 0.19</span>
          <WindowButtons>
            <WindowButton aria-label="minimize">
              <svg width="15" height="15"><path d="M0 7.5H15" stroke="#888" /></svg>
            </WindowButton>
            <WindowButton aria-label="restore">
              <svg width="15" height="16" fill="none" stroke="#888">
                <rect x="0.5" y="3.5" width="11" height="11" rx="2" />
                <path d="M3 1H12C13 1 14 2 14 3V12" />
              </svg>
            </WindowButton>
            <WindowButton aria-label="close">
              <svg width="15" height="15"><path d="M0 0L15 15M15 0L0 15" stroke="#888" /></svg>
            </WindowButton>
          </WindowButtons>
        </TitleBar>
        <MenuBar>
          {MENUS.map((menu) => <MenuItem key={menu}>{menu}</MenuItem>)}
        </MenuBar>

        <ToolbarRow $columns="601fr 258fr 204fr 222fr 592fr 682fr">
          <Strip items={FILE_TOOLS} />
          <Strip>
            <WorkbenchBox $tall>
              <svg width="24" height="24" viewBox="0 0 34 34"><SketchMark w={3.6} /></svg>
              <select aria-label="workbench" defaultValue="Sketcher">
                <option>Sketcher</option>
              </select>
              <Chevron />
            </WorkbenchBox>
          </Strip>
          <Strip items={MACRO_TOOLS} />
          <Strip items={STRUCTURE_TOOLS} />
          <Strip items={SKETCHER_TOOLS} open />
          <Toolbar $open />
        </ToolbarRow>
        <ToolbarRow $columns="860fr 530fr 937fr 64fr 168fr">
          <Strip items={VIEW_TOOLS} />
          <Strip items={SKETCH_TOOLS} />
          <Strip items={CONSTRAINT_TOOLS} />
          <Strip items={["swap"]} />
          <Strip>
            <ToolbarItems>
              <Tools items={["bspline~", "comb"]} />
              <More>»</More>
            </ToolbarItems>
          </Strip>
        </ToolbarRow>

        <Main>
          <Dock>
            <DockTitle>
              组合浏览器
              <FloatButton aria-label="float">
                <svg width="13" height="14" viewBox="0 0 13 14" fill="none" stroke="#333" strokeWidth="1.6">
                  <path d="M4 5V1H12V9H9" /><path d="M4 2H12" strokeWidth="2.4" />
                  <rect x="1" y="6" width="8" height="7" /><path d="M1 7H9" strokeWidth="2.4" />
                </svg>
              </FloatButton>
            </DockTitle>
            <DockTabs>
              <DockTab>模型</DockTab>
              <DockTab $active>
                <svg width="24" height="24" viewBox="0 0 24 24">
                  <path d="M1 4L6 1L20 14L23 22L15 19Z" fill="#3c669f" stroke="#14233c" strokeWidth="1.3" />
                  <path d="M4 3L18 16" stroke="#14233c" />
                  <path d="M20 14L23 22L15 19Z" fill="#eee" stroke="#222" />
                </svg>
                任务
              </DockTab>
            </DockTabs>
            <DockPane>
              <TaskFrame>
                <TaskPanel>
                  <CloseRow><PushButton>Close</PushButton></CloseRow>

                  <TaskGroup title="求解器信息" pad="14px">
                    <Line>Under-constrained sketch with <a href="#dof">1 degree</a> of freedom.</Line>
                    <Line><Solved>解算0秒</Solved></Line>
                    <Row $h="34px">
                      <Check><Tick checked={options.redundant} onChange={() => toggle("redundant")} />自动删除冗余</Check>
                    </Row>
                    <Row $h="40px">
                      <Check><Tick checked={options.update} onChange={() => toggle("update")} />自动更新</Check>
                      <PushButton $wide>更新</PushButton>
                    </Row>
                  </TaskGroup>

                  <TaskGroup title="编辑控件" />

                  <TaskGroup title="约束" pad="18px">
                    <Row $h="34px"><Choice id="filter" label="筛选器:" value="全部" /></Row>
                    <Row $h="33px">
                      <Check $mono><Tick checked={options.hide} onChange={() => toggle("hide")} />Hide internal alignment</Check>
                    </Row>
                    <Row $h="33px">
                      <Check $mono><Tick checked={options.extended} onChange={() => toggle("extended")} />Extended information</Check>
                    </Row>
                    <ListFrame $top="6px">
                      <List>
                        {constraints.map((on, i) => (
                          <ListItem key={i}>
                            <label>
                              <Tick checked={on} onChange={() => toggleConstraint(i)} />
                              <Icon name={i < 6 ? "coincident" : "equal"} size={23} />
                              Constraint{i + 1}
                            </label>
                          </ListItem>
                        ))}
                      </List>
                      <ScrollTrack $list><ScrollThumb $size="108px" /></ScrollTrack>
                    </ListFrame>
                  </TaskGroup>

                  <TaskGroup title="元素" pad="16px">
                    <Row $h="38px"><Choice id="type" label="类型:" value="边" muted /></Row>
                    <Row $h="38px"><Choice id="mode" label="模式:" value="全部" /></Row>
                    <ListFrame $top="4px">
                      <List>
                        {[1, 2, 3, 4, 5, 6].map((n) => (
                          <ListItem key={n}>
                            <svg width="23" height="23" viewBox="0 0 34 34">
                              <Bar d="M6 28L28 6" c="#73c41c" e="#234a00" />
                              <Dot x={6} y={28} r={5} /><Dot x={28} y={6} r={5} />
                            </svg>
                            {n}-线
                          </ListItem>
                        ))}
                      </List>
                    </ListFrame>
                  </TaskGroup>
                </TaskPanel>
                <ScrollTrack><ScrollThumb $size="770px" /></ScrollTrack>
              </TaskFrame>
            </DockPane>
          </Dock>

          <Work>
            <Viewport>
              <Sketch />
              <Cube />
              <Axes />
            </Viewport>
            <DocTabs>
              <DocTab>
                <DocName><Logo />起始页</DocName>
                <CloseTab aria-label="close 起始页"><CloseMark /></CloseTab>
              </DocTab>
              <DocTab $active>
                <DocName><Logo /><span>未命名<Mono> : 1*</Mono></span></DocName>
                <CloseTab aria-label="close 未命名" $active><CloseMark /></CloseTab>
              </DocTab>
            </DocTabs>
          </Work>

          <SideTools>
            <SideHandle />
            <Tools items={GEOMETRY_TOOLS} side />
          </SideTools>
        </Main>

        <StatusBar>
          <Message>
            <span>不允许：</span>
            <Mono>_________.Body.Sketch002.H_Axis</Mono>
          </Message>
          <StatusItem $pad="25px">
            <NavStyle>
              <svg width="16" height="22" viewBox="0 0 16 22" fill="none" stroke="#2e3436">
                <rect x="2" y="2" width="12" height="18" rx="6" strokeWidth="2.6" />
                <circle cx="8" cy="13" r="3.4" strokeWidth="2" />
                <path d="M8 3V8" strokeWidth="2.4" />
              </svg>
              Blender
            </NavStyle>
          </StatusItem>
          <StatusItem $pad="7px"><Mono>83.48 mm x 49.48 mm</Mono></StatusItem>
        </StatusBar>
        <Desktop />
        <Watermark>CSDN @RXXW_Dor</Watermark>
      </Page>
    </>
  );
};

export default App;
